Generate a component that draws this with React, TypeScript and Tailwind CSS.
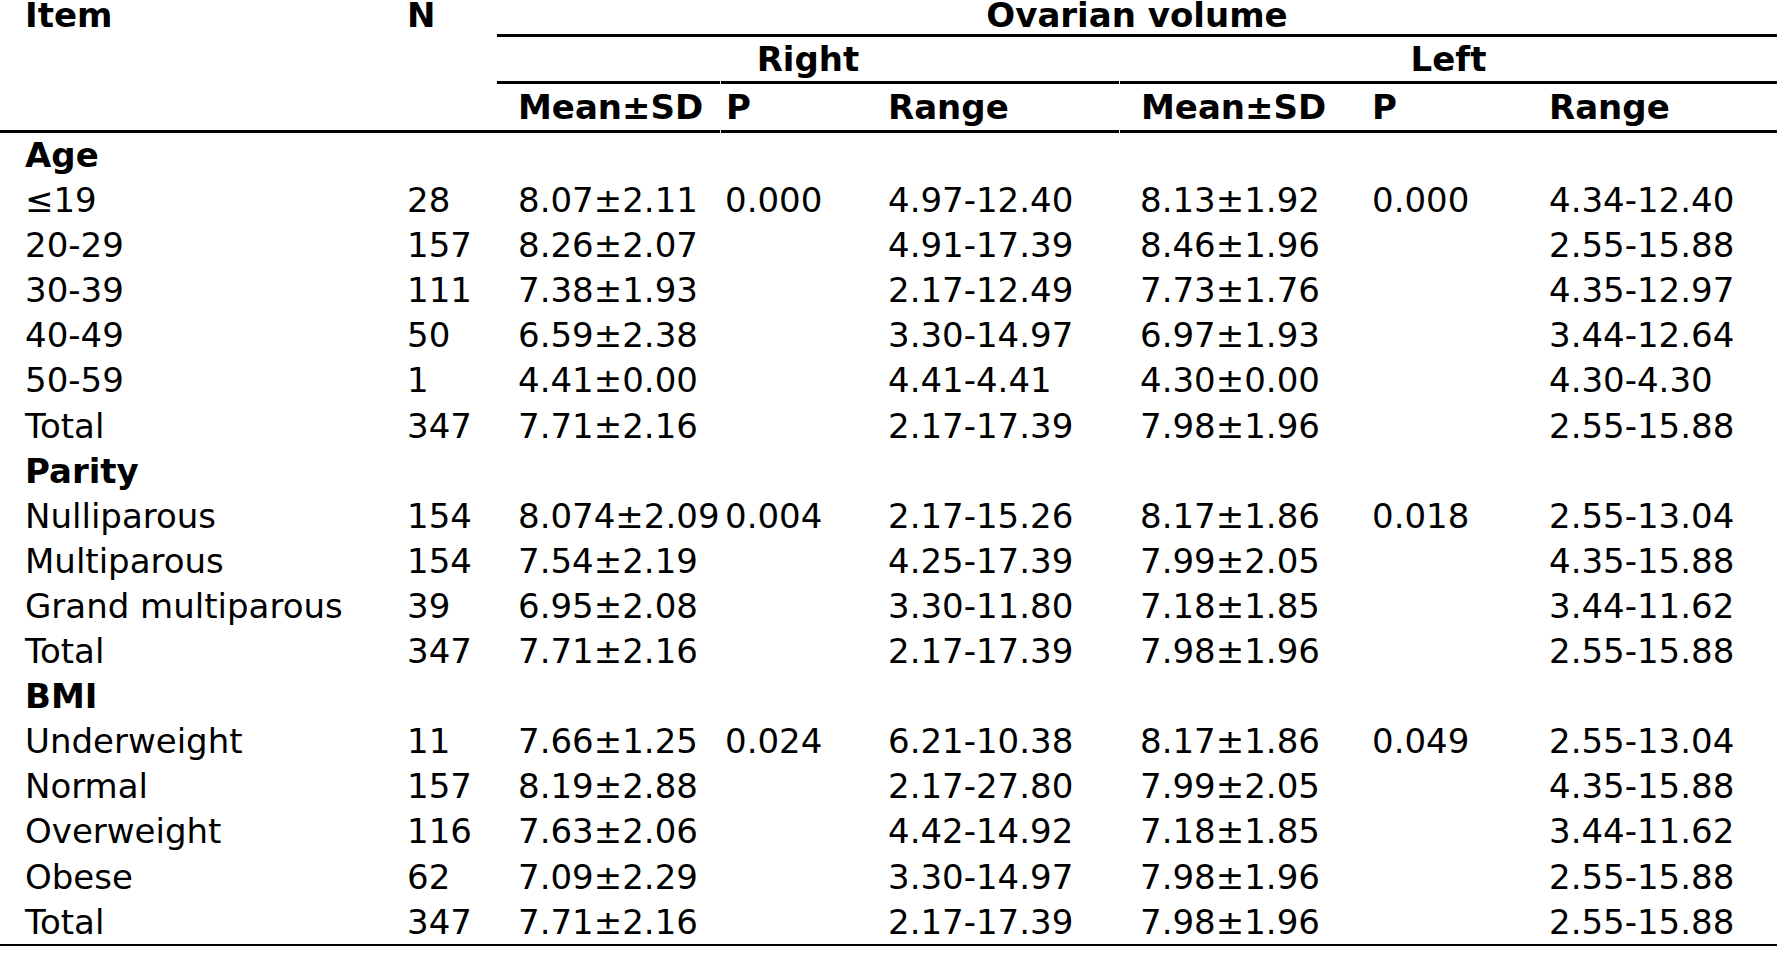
const cols = "grid grid-cols-[385px_112px_223px_146px_253px_238px_171px_249px]";

type Row = { group?: string; cells?: string[] };

const rows: Row[] = [
  { group: "Age" },
  { cells: ["≤19", "28", "8.07±2.11", "0.000", "4.97-12.40", "8.13±1.92", "0.000", "4.34-12.40"] },
  { cells: ["20-29", "157", "8.26±2.07", "", "4.91-17.39", "8.46±1.96", "", "2.55-15.88"] },
  { cells: ["30-39", "111", "7.38±1.93", "", "2.17-12.49", "7.73±1.76", "", "4.35-12.97"] },
  { cells: ["40-49", "50", "6.59±2.38", "", "3.30-14.97", "6.97±1.93", "", "3.44-12.64"] },
  { cells: ["50-59", "1", "4.41±0.00", "", "4.41-4.41", "4.30±0.00", "", "4.30-4.30"] },
  { cells: ["Total", "347", "7.71±2.16", "", "2.17-17.39", "7.98±1.96", "", "2.55-15.88"] },
  { group: "Parity" },
  { cells: ["Nulliparous", "154", "8.074±2.09", "0.004", "2.17-15.26", "8.17±1.86", "0.018", "2.55-13.04"] },
  { cells: ["Multiparous", "154", "7.54±2.19", "", "4.25-17.39", "7.99±2.05", "", "4.35-15.88"] },
  { cells: ["Grand multiparous", "39", "6.95±2.08", "", "3.30-11.80", "7.18±1.85", "", "3.44-11.62"] },
  { cells: ["Total", "347", "7.71±2.16", "", "2.17-17.39", "7.98±1.96", "", "2.55-15.88"] },
  { group: "BMI" },
  { cells: ["Underweight", "11", "7.66±1.25", "0.024", "6.21-10.38", "8.17±1.86", "0.049", "2.55-13.04"] },
  { cells: ["Normal", "157", "8.19±2.88", "", "2.17-27.80", "7.99±2.05", "", "4.35-15.88"] },
  { cells: ["Overweight", "116", "7.63±2.06", "", "4.42-14.92", "7.18±1.85", "", "3.44-11.62"] },
  { cells: ["Obese", "62", "7.09±2.29", "", "3.30-14.97", "7.98±1.96", "", "2.55-15.88"] },
  { cells: ["Total", "347", "7.71±2.16", "", "2.17-17.39", "7.98±1.96", "", "2.55-15.88"] },
];

// left padding per column so the text lands where the reference has it
const pads = ["pl-[25px]", "pl-[22px]", "pl-[21px]", "pl-[5px]", "pl-[22px]", "pl-[21px]", "pl-[15px]", "pl-[21px]"];

export default function App() {
  return (
    <div className="min-h-screen bg-white text-black font-['DejaVu_Sans',sans-serif] text-[34px] whitespace-nowrap">
      <div className="w-[1777px]">
        {/* header row 1 */}
        <div className={`${cols} h-[37px] font-bold leading-[30px]`}>
          <div className={pads[0]}>Item</div>
          <div className={pads[1]}>N</div>
          <div className="col-span-6 border-b-[3px] border-black text-center">Ovarian volume</div>
        </div>
        {/* header row 2 */}
        <div className={`${cols} h-[47px] font-bold`}>
          <div className="col-span-2" />
          <div className="col-span-3 flex flex-col">
            <div className="flex-1 text-center leading-[44px]">Right</div>
            <div className="flex">
              <div className="w-[223px] border-b-[3px] border-black" />
              <div className="ml-px flex-1 border-b-[3px] border-black" />
            </div>
          </div>
          <div className="col-span-3 ml-px border-b-[3px] border-black text-center leading-[44px]">Left</div>
        </div>
        {/* header row 3 */}
        <div className={`${cols} h-[48px] font-bold leading-[46px]`}>
          <div className="col-span-2 border-b-[3px] border-black" />
          <div className={`border-b-[3px] border-black ${pads[2]}`}>Mean±SD</div>
          <div className={`ml-px border-b-[3px] border-black ${pads[3]}`}>P</div>
          <div className={`border-b-[3px] border-black ${pads[4]}`}>Range</div>
          <div className={`ml-px border-b-[3px] border-black ${pads[5]}`}>Mean±SD</div>
          <div className={`border-b-[3px] border-black ${pads[6]}`}>P</div>
          <div className={`border-b-[3px] border-black ${pads[7]}`}>Range</div>
        </div>

        <div className="border-b-2 border-black">
          {rows.map((r, i) =>
            r.group ? (
              <div key={i} className={`${cols} h-[45.1px] leading-[46px] font-bold`}>
                <div className={pads[0]}>{r.group}</div>
              </div>
            ) : (
              <div key={i} className={`${cols} h-[45.1px] leading-[46px]`}>
                {r.cells!.map((c, j) => (
                  <div key={j} className={pads[j]}>{c}</div>
                ))}
              </div>
            ),
          )}
        </div>
      </div>
    </div>
  );
}
